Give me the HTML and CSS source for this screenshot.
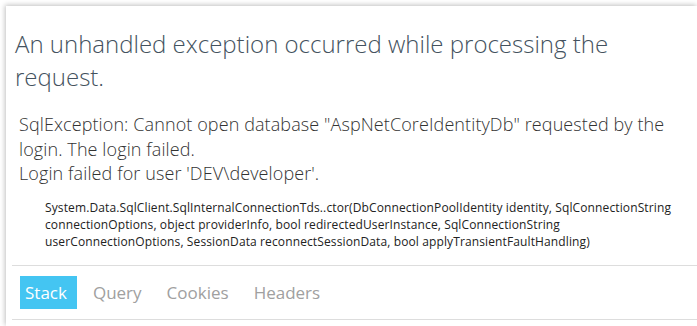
FILE: index.html
```html
<!DOCTYPE html>
<html>
<head>
<meta charset="utf-8">
<link rel="stylesheet" href="styles.css">
</head>
<body>
<div class="frame">
  <h1 class="title">An unhandled exception occurred while processing the request.</h1>
  <div class="titleerror">SqlException: Cannot open database "AspNetCoreIdentityDb" requested by the login. The login failed.<br>Login failed for user 'DEV\developer'.</div>
  <p class="location">System.Data.SqlClient.SqlInternalConnectionTds..ctor(DbConnectionPoolIdentity identity, SqlConnectionString connectionOptions, object providerInfo, bool redirectedUserInstance, SqlConnectionString userConnectionOptions, SessionData reconnectSessionData, bool applyTransientFaultHandling)</p>
  <ul class="tabs">
    <li class="tab selected">Stack</li>
    <li class="tab">Query</li>
    <li class="tab">Cookies</li>
    <li class="tab">Headers</li>
  </ul>
</div>
</body>
</html>
```
FILE: styles.css
```css
html, body {
  margin: 0;
  padding: 0;
  background: #fff;
  overflow: hidden;
}
body {
  font-family: "Open Sans", "Noto Sans", sans-serif;
  width: 697px;
  height: 326px;
}
.frame {
  margin: 6px 0 0 6px;
  width: 691px;
  height: 320px;
  background: #fff;
  box-shadow: -1px -1px 5px rgba(0,0,0,0.25);
  padding: 1px 0 0 0;
  box-sizing: border-box;
  overflow: hidden;
}
.title {
  font-weight: 300;
  font-size: 24px;
  line-height: 33px;
  color: #44525e;
  margin: 20px 0 0 9px;
  width: 640px;
}
.titleerror {
  font-weight: 300;
  font-size: 18px;
  line-height: 24.5px;
  letter-spacing: 0.1px;
  color: #333;
  margin: 19px 0 0 13px;
  width: 666px;
}
.location {
  font-size: 12px;
  line-height: 17px;
  letter-spacing: 0.12px;
  color: #222;
  margin: 13px 0 0 39px;
  width: 640px;
}
.tabs {
  list-style: none;
  margin: 15px 0 0 6px;
  padding: 10px 0 10px 8px;
  border-top: 1px solid #ddd;
  border-bottom: 1px solid #ddd;
  display: flex;
}
.tab {
  font-size: 17px;
  line-height: 33px;
  padding: 0 5px;
  margin-right: 15px;
  color: #a0a0a0;
}
.tab.selected {
  background: #44c5f2;
  color: #fff;
  padding: 0 10px 0 5px;
  margin-right: 11px;
}
```
